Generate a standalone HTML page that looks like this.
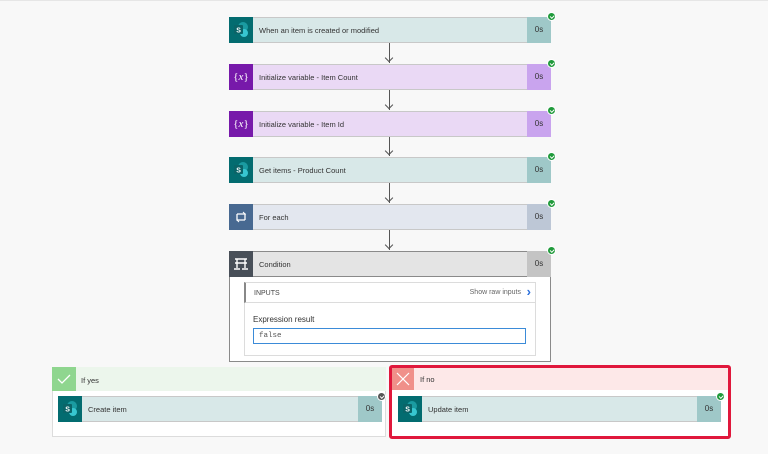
<!DOCTYPE html>
<html><head><meta charset="utf-8"><style>
*{margin:0;padding:0;box-sizing:border-box}
body{width:768px;height:454px;background:#f8f8f8;font-family:"Liberation Sans",sans-serif;position:relative;overflow:hidden}
.a{position:absolute}
.card{position:absolute;height:26px;border:1px solid #c8c8c8;font-size:7.5px;color:#333}
.card .ic{position:absolute;left:-1px;top:-1px;width:24px;height:26px}
.card .t{position:absolute;left:29px;top:8px}
.card .tm{position:absolute;right:-1px;top:-1px;width:24px;height:26px;text-align:center;line-height:26px;font-size:8px;color:#333}
.chk{position:absolute;width:9px;height:9px;border-radius:50%;background:#1f9a3a;border:1px solid #fff}
.chk:after{content:"";position:absolute;left:2px;top:1.5px;width:3px;height:1.6px;border-left:1px solid #fff;border-bottom:1px solid #fff;transform:rotate(-45deg)}
.ln{position:absolute;left:389px;width:1px;background:#555}
.ar{position:absolute;left:386px;width:6px;height:6px;border-right:1px solid #555;border-bottom:1px solid #555;transform:rotate(45deg)}
.sp{background:#036c70}
.var{background:#7719aa;color:#fff;font-family:"Liberation Serif",serif;font-size:11px;text-align:center;line-height:26px}
</style></head><body>
<div class="a" style="left:0;top:0;width:768px;height:1px;background:#e6e6e6"></div>

<div class="ln" style="top:43px;height:20px"></div><div class="ar" style="top:55px"></div>
<div class="ln" style="top:90px;height:20px"></div><div class="ar" style="top:102px"></div>
<div class="ln" style="top:137px;height:19px"></div><div class="ar" style="top:148px"></div>
<div class="ln" style="top:183px;height:20px"></div><div class="ar" style="top:195px"></div>
<div class="ln" style="top:230px;height:20px"></div><div class="ar" style="top:242px"></div>

<svg width="0" height="0" style="position:absolute"><defs>
<g id="sp"><circle cx="14" cy="10" r="5" fill="#1a9ba1"/><circle cx="15" cy="16" r="4" fill="#37c6d0"/><rect x="5" y="8" width="9" height="9" rx="1" fill="#0a6468"/><text x="7.3" y="15.5" font-size="7" fill="#fff" font-family="Liberation Sans" font-weight="bold">S</text></g>
</defs></svg>

<div class="card" style="left:229px;top:17px;width:322px;background:#d8e8e8"><div class="ic sp"><svg width="24" height="26"><use href="#sp"/></svg></div><div class="t">When an item is created or modified</div><div class="tm" style="background:#9fc8c8">0s</div><div class="chk" style="right:-6px;top:-6px"></div></div>

<div class="card" style="left:229px;top:64px;width:322px;background:#ead9f5"><div class="ic var">{<i>x</i>}</div><div class="t">Initialize variable - Item Count</div><div class="tm" style="background:#c9a4ee">0s</div><div class="chk" style="right:-6px;top:-6px"></div></div>

<div class="card" style="left:229px;top:111px;width:322px;background:#ead9f5"><div class="ic var">{<i>x</i>}</div><div class="t">Initialize variable - Item Id</div><div class="tm" style="background:#c9a4ee">0s</div><div class="chk" style="right:-6px;top:-6px"></div></div>

<div class="card" style="left:229px;top:157px;width:322px;background:#d8e8e8"><div class="ic sp"><svg width="24" height="26"><use href="#sp"/></svg></div><div class="t">Get items - Product Count</div><div class="tm" style="background:#9fc8c8">0s</div><div class="chk" style="right:-6px;top:-6px"></div></div>

<div class="card" style="left:229px;top:204px;width:322px;background:#e3e7ef"><div class="ic" style="background:#486991"><svg width="24" height="26"><path d="M8 10h8v6M16 16H8v-6" fill="none" stroke="#fff" stroke-width="1.3"/><path d="M14 8l2 2-2 0M10 18l-2-2" stroke="#fff" fill="none"/></svg></div><div class="t">For each</div><div class="tm" style="background:#bdc7d6">0s</div><div class="chk" style="right:-6px;top:-6px"></div></div>

<div class="a" style="left:229px;top:251px;width:322px;height:111px;border:1px solid #8a8a8a;background:#fff"></div>
<div class="card" style="left:229px;top:251px;width:322px;background:#e4e4e4;border-color:#8a8a8a"><div class="ic" style="background:#484f58"><svg width="24" height="26"><path d="M6 8h12M8 8v9M16 8v9M6 12h12M5 18h6M13 18h6" stroke="#fff" stroke-width="1.4" fill="none"/></svg></div><div class="t">Condition</div><div class="tm" style="background:#c4c4c4">0s</div><div class="chk" style="right:-6px;top:-6px"></div></div>
<div class="a" style="left:244px;top:282px;width:292px;height:74px;border:1px solid #dcdcdc;background:#fff"></div>
<div class="a" style="left:244px;top:282px;width:292px;height:21px;border:1px solid #dcdcdc;border-left:2px solid #888;font-size:7px;color:#444;padding:7px 0 0 8px">INPUTS<span style="position:absolute;right:14px;top:6px;color:#666">Show raw inputs</span><span style="position:absolute;right:4px;top:1px;color:#2a6fdb;font-size:13px;font-weight:bold">›</span></div>
<div class="a" style="left:253px;top:315px;font-size:8px;color:#333">Expression result</div>
<div class="a" style="left:253px;top:328px;width:273px;height:16px;border:1px solid #3b8bd8;font-family:'Liberation Mono',monospace;font-size:7.5px;color:#555;padding:3px 0 0 5px">false</div>

<div class="a" style="left:52px;top:367px;width:334px;height:70px;border:1px solid #dcdcdc;background:#fff"></div>
<div class="a" style="left:52px;top:367px;width:334px;height:24px;background:#ecf6ec"></div>
<div class="a" style="left:52px;top:367px;width:24px;height:24px;background:#8fd68f"><svg width="24" height="24"><path d="M6 12l4 4 8-8" stroke="#fff" stroke-width="1.3" fill="none"/></svg></div>
<div class="a" style="left:81px;top:376px;font-size:7.5px;color:#333">If yes</div>
<div class="card" style="left:58px;top:396px;width:324px;background:#d8e8e8"><div class="ic sp"><svg width="24" height="26"><use href="#sp"/></svg></div><div class="t">Create item</div><div class="tm" style="background:#9fc8c8">0s</div><div class="chk" style="right:-5px;top:-5px;background:#555"></div></div>

<div class="a" style="left:389px;top:365px;width:342px;height:74px;border:3px solid #e0183c;border-radius:3px;background:#fff"></div>
<div class="a" style="left:392px;top:368px;width:336px;height:22px;background:#fde8e8"></div>
<div class="a" style="left:392px;top:368px;width:22px;height:22px;background:#f0908a"><svg width="22" height="22"><path d="M5 5l12 12M17 5L5 17" stroke="#fff" stroke-width="1.2"/></svg></div>
<div class="a" style="left:420px;top:375px;font-size:7.5px;color:#333">If no</div>
<div class="card" style="left:398px;top:396px;width:323px;background:#d8e8e8"><div class="ic sp"><svg width="24" height="26"><use href="#sp"/></svg></div><div class="t">Update item</div><div class="tm" style="background:#9fc8c8">0s</div><div class="chk" style="right:-5px;top:-5px"></div></div>
</body></html>
